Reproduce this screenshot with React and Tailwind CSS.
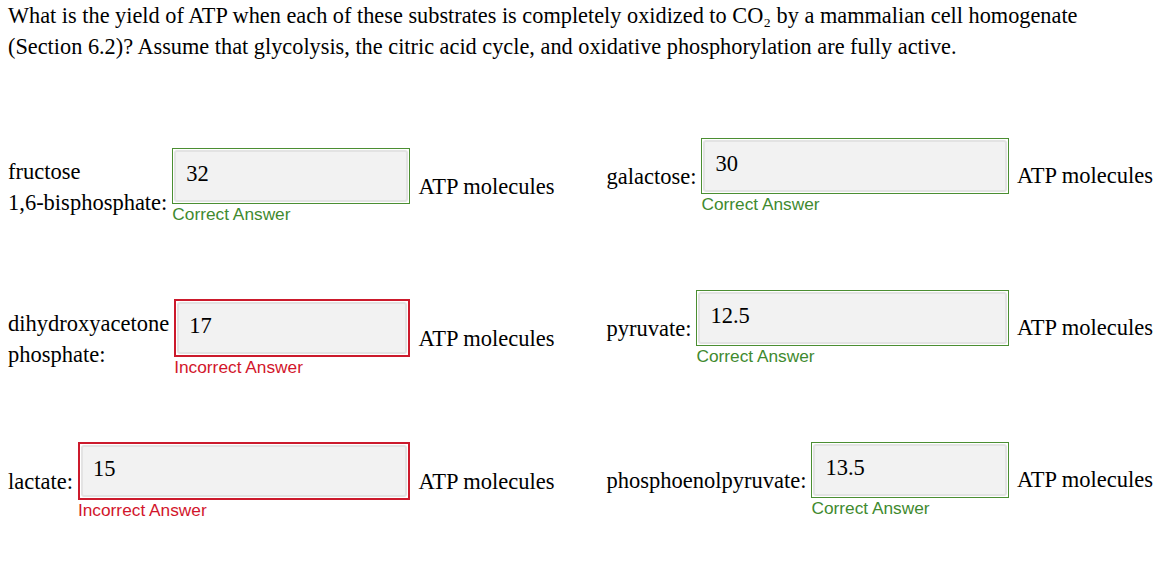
const serif = "font-['Liberation_Serif','Times_New_Roman',serif]"

const rows = [
  [
    { label: ['fructose', '1,6-bisphosphate:'], value: '32', correct: true, shift: 'pt-[21px]' },
    { label: ['galactose:'], value: '30', correct: true, shift: '' },
  ],
  [
    { label: ['dihydroxyacetone', 'phosphate:'], value: '17', correct: false, shift: 'pt-[21px]' },
    { label: ['pyruvate:'], value: '12.5', correct: true, shift: '' },
  ],
  [
    { label: ['lactate:'], value: '15', correct: false, shift: 'pt-[3px]' },
    { label: ['phosphoenolpyruvate:'], value: '13.5', correct: true, shift: '' },
  ],
]

function AnswerCell({ label, value, correct, shift }) {
  return (
    <div className={`flex items-center h-[152px] ${shift}`}>
      <span className="shrink-0 whitespace-nowrap leading-[31px]">
        {label.map((line, k) => (
          <span key={k} className="block">{line}</span>
        ))}
      </span>
      <div className="flex-1 ml-[5px] flex flex-col">
        <div
          className={
            correct
              ? 'border border-[#4b8e32] p-px'
              : 'border-2 border-[#cc1a2c] p-px'
          }
        >
          <input
            readOnly
            value={value}
            className={`${serif} w-full h-[52px] bg-[#f2f2f2] border-2 border-[#e3e3e3] rounded-[3px] pl-[10px] pb-[4px] text-[22.5px] text-black outline-none`}
          />
        </div>
        <span
          className={`font-['Liberation_Sans',Arial,sans-serif] text-[17.3px] leading-[21px] ${
            correct ? 'text-[#3f8a2f]' : 'text-[#d2152b]'
          }`}
        >
          {correct ? 'Correct Answer' : 'Incorrect Answer'}
        </span>
      </div>
      <span className="shrink-0 ml-[8px] whitespace-nowrap">ATP molecules</span>
    </div>
  )
}

export default function App() {
  return (
    <div className={`${serif} text-[22.5px] text-black bg-white min-h-[569px] pl-[8px] w-[1153px]`}>
      <p className="text-[22.3px] leading-[31px]">
        What is the yield of ATP when each of these substrates is completely oxidized to CO₂ by a mammalian cell homogenate (Section 6.2)? Assume that glycolysis, the citric acid cycle, and oxidative phosphorylation are fully active.
      </p>

      <div className="grid grid-cols-2 gap-x-[52px] mt-[38px]">
        {rows.map((row, i) =>
          row.map((cell, j) => <AnswerCell key={`${i}-${j}`} {...cell} />)
        )}
      </div>
    </div>
  )
}
